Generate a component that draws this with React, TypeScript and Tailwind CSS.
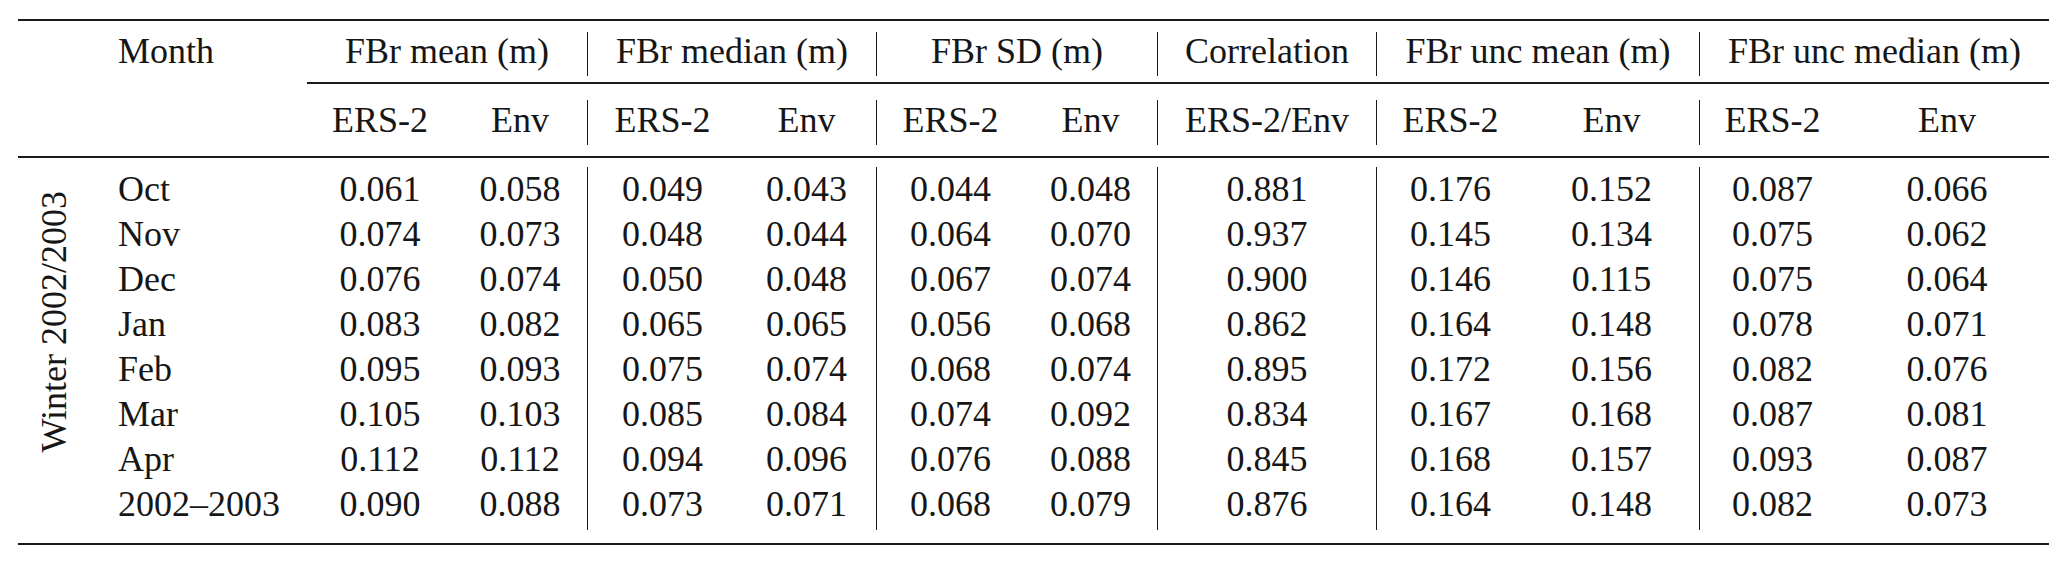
import React from "react";

const GRID =
  "grid grid-cols-[72px_217px_146px_134px_150px_139px_148px_133px_219px_148px_175px_146px_204px]";

const months = ["Oct", "Nov", "Dec", "Jan", "Feb", "Mar", "Apr", "2002–2003"];

const data: string[][] = [
  ["0.061", "0.058", "0.049", "0.043", "0.044", "0.048", "0.881", "0.176", "0.152", "0.087", "0.066"],
  ["0.074", "0.073", "0.048", "0.044", "0.064", "0.070", "0.937", "0.145", "0.134", "0.075", "0.062"],
  ["0.076", "0.074", "0.050", "0.048", "0.067", "0.074", "0.900", "0.146", "0.115", "0.075", "0.064"],
  ["0.083", "0.082", "0.065", "0.065", "0.056", "0.068", "0.862", "0.164", "0.148", "0.078", "0.071"],
  ["0.095", "0.093", "0.075", "0.074", "0.068", "0.074", "0.895", "0.172", "0.156", "0.082", "0.076"],
  ["0.105", "0.103", "0.085", "0.084", "0.074", "0.092", "0.834", "0.167", "0.168", "0.087", "0.081"],
  ["0.112", "0.112", "0.094", "0.096", "0.076", "0.088", "0.845", "0.168", "0.157", "0.093", "0.087"],
  ["0.090", "0.088", "0.073", "0.071", "0.068", "0.079", "0.876", "0.164", "0.148", "0.082", "0.073"],
];

// columns (index into data row) that start a new group -> vertical rule on the left
const ruled = new Set([2, 4, 6, 7, 9]);

export default function App() {
  return (
    <div
      className="w-[2067px] h-[562px] bg-white text-[#161616] text-[36px] leading-[36px] pt-[19px]"
      style={{ fontFamily: '"Liberation Serif", "Times New Roman", serif' }}
    >
      <div className="ml-[18px] w-[2031px] flex flex-col">
        {/* top rule */}
        <div className="h-[2px] bg-[#1a1a1a]" />

        {/* header row 1 */}
        <div className={`${GRID} h-[44px] mt-[11px]`}>
          <div className="col-span-2 pl-[100px] pt-[1px]">Month</div>
          <div className="col-span-2 text-center pt-[1px]">FBr mean (m)</div>
          <div className="col-span-2 text-center pt-[1px] border-l-[1.5px] border-[#1a1a1a]">
            FBr median (m)
          </div>
          <div className="col-span-2 text-center pt-[1px] border-l-[1.5px] border-[#1a1a1a]">
            FBr SD (m)
          </div>
          <div className="text-center pt-[1px] border-l-[1.5px] border-[#1a1a1a]">Correlation</div>
          <div className="col-span-2 text-center pt-[1px] border-l-[1.5px] border-[#1a1a1a]">
            FBr unc mean (m)
          </div>
          <div className="col-span-2 text-center pt-[1px] border-l-[1.5px] border-[#1a1a1a]">
            FBr unc median (m)
          </div>
        </div>

        {/* partial rule */}
        <div className="h-[2px] bg-[#1a1a1a] ml-[289px] mt-[6px]" />

        {/* header row 2 */}
        <div className={`${GRID} h-[45px] mt-[16px]`}>
          <div className="col-span-2" />
          <div className="text-center pt-[2px]">ERS-2</div>
          <div className="text-center pt-[2px]">Env</div>
          <div className="text-center pt-[2px] border-l-[1.5px] border-[#1a1a1a]">ERS-2</div>
          <div className="text-center pt-[2px]">Env</div>
          <div className="text-center pt-[2px] border-l-[1.5px] border-[#1a1a1a]">ERS-2</div>
          <div className="text-center pt-[2px]">Env</div>
          <div className="text-center pt-[2px] border-l-[1.5px] border-[#1a1a1a]">ERS-2/Env</div>
          <div className="text-center pt-[2px] border-l-[1.5px] border-[#1a1a1a]">ERS-2</div>
          <div className="text-center pt-[2px]">Env</div>
          <div className="text-center pt-[2px] border-l-[1.5px] border-[#1a1a1a]">ERS-2</div>
          <div className="text-center pt-[2px]">Env</div>
        </div>

        {/* mid rule */}
        <div className="h-[2px] bg-[#1a1a1a] mt-[11px]" />

        {/* body */}
        <div className={`${GRID} h-[363px] mt-[9px] leading-[45px]`}>
          <div className="flex flex-col">
            <div className="h-[315px] flex items-center justify-center pb-[6px]">
              <span className="[writing-mode:vertical-rl] rotate-180 leading-[36px] whitespace-nowrap">
                Winter 2002/2003
              </span>
            </div>
          </div>
          <div className="flex flex-col pl-[28px]">
            {months.map((m) => (
              <div key={m} className="whitespace-nowrap">
                {m}
              </div>
            ))}
          </div>
          {data[0].map((_, c) => (
            <div
              key={c}
              className={
                ruled.has(c)
                  ? "flex flex-col text-center border-l-[1.5px] border-[#1a1a1a]"
                  : "flex flex-col text-center"
              }
            >
              {data.map((row, r) => (
                <div key={r}>{row[c]}</div>
              ))}
            </div>
          ))}
        </div>

        {/* bottom rule */}
        <div className="h-[2px] bg-[#1a1a1a] mt-[13px]" />
      </div>
    </div>
  );
}
